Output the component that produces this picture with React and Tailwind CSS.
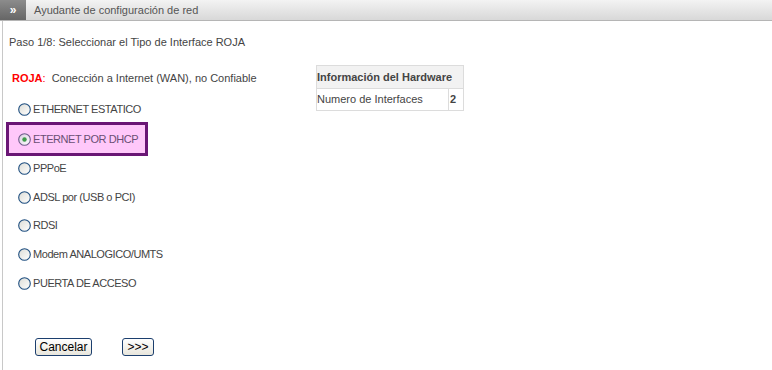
import React from "react";

const font = { fontFamily: '"Liberation Sans", Arial, sans-serif' };

function Radio({ checked }) {
  return (
    <svg width="13" height="13" viewBox="0 0 13 13" className="shrink-0">
      <defs>
        <linearGradient id={checked ? "rg1" : "rg0"} x1="0" y1="0" x2="1" y2="1">
          <stop offset="0" stopColor={checked ? "#d9cbe0" : "#dcdcd6"} />
          <stop offset="1" stopColor="#ffffff" />
        </linearGradient>
      </defs>
      <circle cx="6.5" cy="6.5" r="5.8" fill={`url(#${checked ? "rg1" : "rg0"})`} stroke={checked ? "#6e5a8a" : "#1f4f80"} strokeWidth="1.1" />
      {checked && <circle cx="6.5" cy="6.5" r="2.2" fill="#3f9a4a" />}
    </svg>
  );
}

function Row({ label, className = "" }) {
  return (
    <div className={`flex items-center h-[14px] pl-[15px] gap-[2px] text-[11px] text-[#444] whitespace-nowrap ${className}`}>
      <Radio />
      <span className="tracking-[-0.45px]">{label}</span>
    </div>
  );
}

function Btn({ children, className = "" }) {
  return (
    <button
      className={`h-[18px] rounded-[3px] border border-[#1c3f6e] bg-gradient-to-b from-[#ffffff] to-[#e8e6dc] text-[12px] leading-[14px] text-black flex items-center justify-center ${className}`}
      style={font}
    >
      {children}
    </button>
  );
}

export default function App() {
  return (
    <div className="w-[772px] h-[370px] bg-white overflow-hidden flex flex-col" style={font}>
      <div className="h-[21px] flex border-b border-[#b5b5b5] bg-gradient-to-b from-[#f3f3f3] to-[#d8d8d8] shrink-0">
        <div className="w-[26px] h-[20px] bg-gradient-to-b from-[#8c8c8c] to-[#666666] flex items-center justify-center text-white text-[12px] font-bold leading-none">
          »
        </div>
        <div className="pl-[8px] flex items-center text-[11px] text-[#555]">Ayudante de configuración de red</div>
      </div>
      <div className="flex-1 ml-[2px] border-l border-[#c8c8c8] flex flex-col">
        <div className="mt-[15px] h-[13px] leading-[13px] pl-[6px] text-[11px] text-[#444]">
          Paso 1/8: Seleccionar el Tipo de Interface ROJA
        </div>
        <div className="flex">
          <div className="w-[313px] flex flex-col">
            <div className="mt-[22px] h-[14px] flex items-center pl-[9px] text-[11px] text-[#444] whitespace-nowrap">
              <span className="text-[#ff0000] font-bold">ROJA</span>
              <span className="text-[#ff0000]">:</span>
              <span className="ml-[6px]">Conección a Internet (WAN), no Confiable</span>
            </div>
            <Row label="ETHERNET ESTATICO" className="mt-[17px]" />
            <div className="mt-[6px] ml-[3px] w-[142px] h-[34px] border-[3px] border-[#6a1675] bg-[#ffc8fa] flex items-center pl-[9px] gap-[2px] text-[11px] text-[#6a4f74] whitespace-nowrap">
              <Radio checked />
              <span className="tracking-[-0.45px]">ETERNET POR DHCP</span>
            </div>
            <Row label="PPPoE" className="mt-[5px]" />
            <Row label="ADSL por (USB o PCI)" className="mt-[15px]" />
            <Row label="RDSI" className="mt-[14px]" />
            <Row label="Modem ANALOGICO/UMTS" className="mt-[15px]" />
            <Row label="PUERTA DE ACCESO" className="mt-[15px]" />
            <div className="mt-[48px] flex pl-[32px]">
              <Btn className="w-[57px]">Cancelar</Btn>
              <Btn className="w-[32px] ml-[30px]">&gt;&gt;&gt;</Btn>
            </div>
          </div>
          <div className="mt-[16px]">
            <table className="border-collapse text-[11px] text-[#444]">
              <tbody>
                <tr>
                  <td colSpan={2} className="h-[23px] w-[147px] border border-[#dcdcdc] bg-[#f2f2f2] font-bold pl-[0px] pr-[3px] whitespace-nowrap">
                    Información del Hardware
                  </td>
                </tr>
                <tr>
                  <td className="h-[22px] border border-[#dcdcdc] pl-[0px] w-[132px] whitespace-nowrap">Numero de Interfaces</td>
                  <td className="border border-[#dcdcdc] pl-[1px] font-bold">2</td>
                </tr>
              </tbody>
            </table>
          </div>
        </div>
      </div>
    </div>
  );
}
